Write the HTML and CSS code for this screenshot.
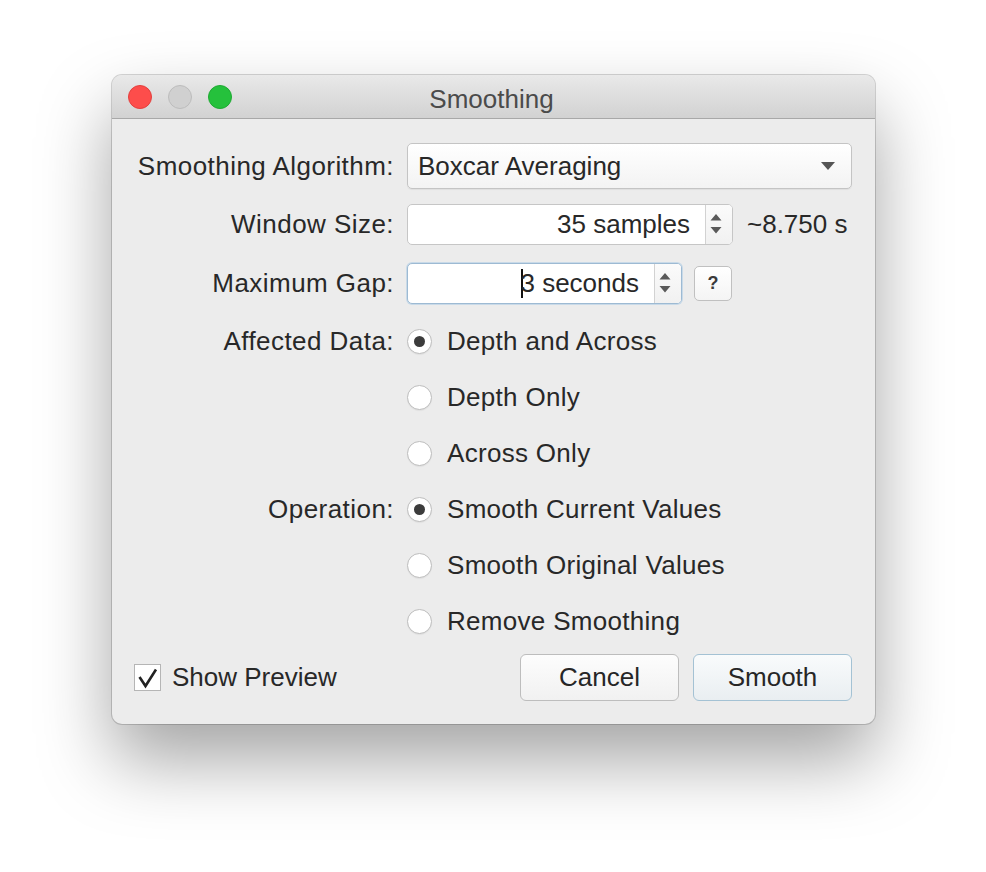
FILE: index.html
```html
<!DOCTYPE html>
<html>
  <head>
    <title>Smoothing</title>
    <meta name="viewport" content="width=device-width, initial-scale=1">
    <link rel="stylesheet" href="styles.css">
  </head>
  <body>
    <div class="window">
      <div class="titlebar">
        <div class="lights">
          <span class="light red"></span>
          <span class="light idle"></span>
          <span class="light green"></span>
        </div>
        <div class="title">Smoothing</div>
        <div></div>
      </div>
      <div class="content">
        <div class="form">
          <span class="label">Smoothing Algorithm:</span>
          <div class="combo">
            <span>Boxcar Averaging</span>
            <svg class="caret" width="14" height="8" viewBox="0 0 14 8"><path d="M0 0 L14 0 L7 8 Z" fill="#555"/></svg>
          </div>

          <span class="label">Window Size:</span>
          <div class="inline">
            <div class="spin wide">
              <div class="field">35 samples</div>
              <div class="arrows">
                <svg width="12" height="20" viewBox="0 0 12 20"><path d="M0.5 6.5 L6 0 L11.5 6.5 Z M0.5 13 L11.5 13 L6 19.5 Z" fill="#5a5a5a"/></svg>
              </div>
            </div>
            <span class="note">~8.750 s</span>
          </div>

          <span class="label">Maximum Gap:</span>
          <div class="inline gap-row">
            <div class="spin narrow focused">
              <div class="field"><span class="cursor"></span>3 seconds</div>
              <div class="arrows">
                <svg width="12" height="20" viewBox="0 0 12 20"><path d="M0.5 6.5 L6 0 L11.5 6.5 Z M0.5 13 L11.5 13 L6 19.5 Z" fill="#5a5a5a"/></svg>
              </div>
            </div>
            <button class="help">?</button>
          </div>

          <span class="label">Affected Data:</span>
          <div class="radio"><span class="dot on"></span>Depth and Across</div>
          <span></span>
          <div class="radio"><span class="dot"></span>Depth Only</div>
          <span></span>
          <div class="radio"><span class="dot"></span>Across Only</div>

          <span class="label">Operation:</span>
          <div class="radio"><span class="dot on"></span>Smooth Current Values</div>
          <span></span>
          <div class="radio"><span class="dot"></span>Smooth Original Values</div>
          <span></span>
          <div class="radio"><span class="dot"></span>Remove Smoothing</div>
        </div>

        <div class="footer">
          <div class="check">
            <span class="box">
              <svg width="27" height="27" viewBox="0 0 27 27"><path d="M5.5 13 L11.5 22 L22 5.5" fill="none" stroke="#222" stroke-width="2.6"/></svg>
            </span>
            Show Preview
          </div>
          <div class="buttons">
            <button class="btn">Cancel</button>
            <button class="btn default">Smooth</button>
          </div>
        </div>
      </div>
    </div>
  </body>
</html>
```

FILE: styles.css
```css
html {
  background: #ffffff;
}
body {
  margin: 0;
  min-height: 872px;
  padding-top: 75px;
  box-sizing: border-box;
  font-family: "Liberation Sans", Arial, sans-serif;
  font-size: 26px;
  color: #282828;
}
.window {
  margin-left: 112px;
  width: 763px;
  height: 649px;
  border-radius: 10px;
  background: #ececec;
  overflow: hidden;
  box-shadow: 0 0 0 1px rgba(0, 0, 0, 0.16), 0 36px 72px rgba(0, 0, 0, 0.36);
}
.titlebar {
  height: 43px;
  display: grid;
  grid-template-columns: 1fr auto 1fr;
  align-items: center;
  background: linear-gradient(#e9e9e9, #d2d2d2);
  border-bottom: 1px solid #a8a8a8;
}
.lights {
  display: flex;
  gap: 16px;
  padding-left: 16px;
}
.light {
  width: 24px;
  height: 24px;
  border-radius: 50%;
  box-sizing: border-box;
}
.red {
  background: #fd4d4b;
  border: 1px solid #e2403e;
}
.idle {
  background: #d0d0d0;
  border: 1px solid #bcbcbc;
}
.green {
  background: #25c13c;
  border: 1px solid #1fa933;
}
.title {
  color: #4b4b4b;
  margin-left: -4px;
  padding-top: 5px;
}
.content {
  padding: 18px 23px 0 22px;
}
.form {
  display: grid;
  grid-template-columns: 259px 1fr;
  grid-template-rows: 58px 58px 60px repeat(6, 56px);
  column-gap: 14px;
  align-items: center;
}
.label {
  text-align: right;
  letter-spacing: 0.45px;
  margin-right: -1px;
}
.combo {
  height: 46px;
  box-sizing: border-box;
  border: 1px solid #c4c4c4;
  border-radius: 5px;
  background: linear-gradient(#ffffff, #f3f3f3);
  display: flex;
  align-items: center;
  justify-content: space-between;
  padding: 0 16px 0 10px;
  box-shadow: 0 1px 1px rgba(0, 0, 0, 0.06);
}
.inline {
  display: flex;
  align-items: center;
  gap: 14px;
}
.gap-row {
  gap: 12px;
}
.spin {
  height: 41px;
  box-sizing: border-box;
  border: 1px solid #c6c6c6;
  border-radius: 5px;
  background: #ffffff;
  display: flex;
}
.wide {
  width: 326px;
}
.narrow {
  width: 275px;
}
.focused {
  border-color: #9dbad3;
  box-shadow: 0 0 0 1px #c9dae8;
}
.field {
  flex: 1;
  display: flex;
  align-items: center;
  justify-content: flex-end;
  padding-right: 15px;
}
.cursor {
  width: 2px;
  height: 29px;
  background: #111;
  margin-right: -3px;
}
.arrows {
  width: 27px;
  border-left: 1px solid #d2d2d2;
  display: flex;
  align-items: center;
  padding-left: 4px;
  box-sizing: border-box;
  background: linear-gradient(#fbfbfb, #f1f1f1);
  border-radius: 0 4px 4px 0;
}
.help {
  width: 38px;
  height: 35px;
  border: 1px solid #c0c0c0;
  border-radius: 5px;
  background: linear-gradient(#ffffff, #f4f4f4);
  font-family: "Liberation Sans", Arial, sans-serif;
  font-size: 18px;
  font-weight: bold;
  color: #3a3a3a;
  padding: 0;
}
.radio {
  display: flex;
  align-items: center;
  gap: 15px;
  letter-spacing: 0.3px;
}
.dot {
  width: 25px;
  height: 25px;
  box-sizing: border-box;
  border-radius: 50%;
  border: 1px solid #bdbdbd;
  background: #ffffff;
  display: flex;
  align-items: center;
  justify-content: center;
  box-shadow: 0 1px 1px rgba(0, 0, 0, 0.05);
}
.dot.on::after {
  content: "";
  width: 11px;
  height: 11px;
  border-radius: 50%;
  background: #3c3c3c;
}
.footer {
  height: 57px;
  display: flex;
  align-items: center;
  justify-content: space-between;
}
.check {
  display: flex;
  align-items: center;
  gap: 11px;
}
.box {
  width: 27px;
  height: 27px;
  box-sizing: border-box;
  border: 1px solid #b5b5b5;
  background: #ffffff;
  display: flex;
}
.box svg {
  margin: -1px;
}
.buttons {
  display: flex;
  gap: 14px;
}
.btn {
  width: 159px;
  height: 47px;
  border: 1px solid #bdbdbd;
  border-radius: 6px;
  background: linear-gradient(#fdfdfd, #f1f1f1);
  font-family: "Liberation Sans", Arial, sans-serif;
  font-size: 26px;
  color: #262626;
  padding: 0;
}
.btn.default {
  border-color: #a4c2d4;
  background: linear-gradient(#f9fbfc, #e9eef1);
}
```
